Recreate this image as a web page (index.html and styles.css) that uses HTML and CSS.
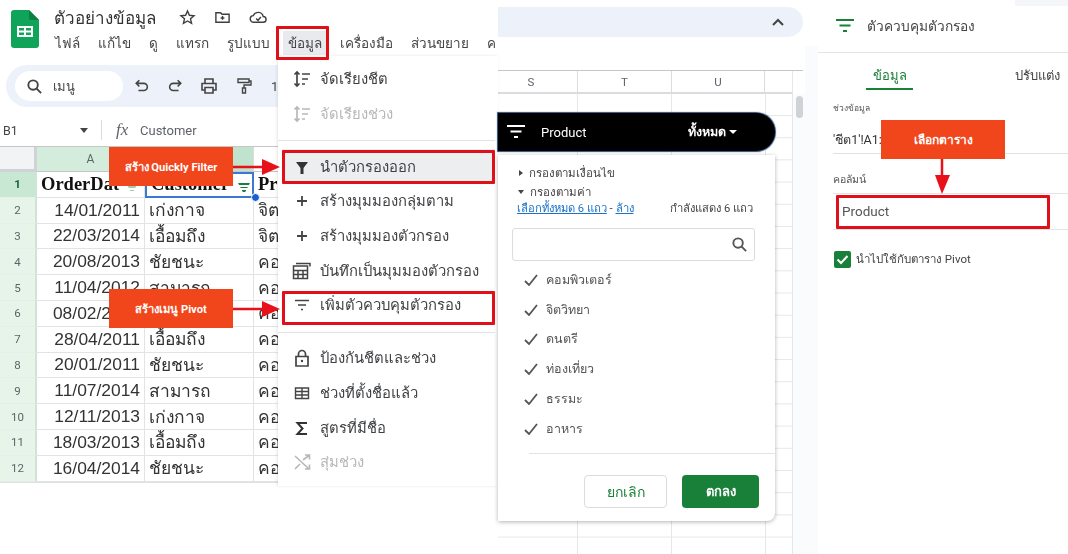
FILE: index.html
```html
<!DOCTYPE html>
<html lang="th">

<head>
    <meta charset="utf-8">
    <title>ตัวอย่างข้อมูล</title>
    <link rel="stylesheet" href="styles.css">
</head>

<body>
    <div id="page">
        <div id="sheet">
            <div id="docbar">
                <svg class="logo" viewBox="0 0 28 38" width="28" height="38">
                    <path d="M3 0h15l10 10v25a3 3 0 0 1-3 3H3a3 3 0 0 1-3-3V3a3 3 0 0 1 3-3z" fill="#0fa45a"/>
                    <path d="M18 0l10 10h-8a2 2 0 0 1-2-2z" fill="#0b8043"/>
                    <path d="M6 16h16v11H6z" fill="#fff"/>
                    <path d="M8 18h5v2.500H8zM15 18h5v2.500h-5zM8 22.500h5V25H8zM15 22.500h5V25h-5z" fill="#0fa45a"/>
                </svg>
                <div class="docinfo">
                    <div class="doctitle">
                        <span>ตัวอย่างข้อมูล</span>
                        <svg class="ico" viewBox="0 0 18 18" width="17" height="17"><path d="M9 2.200l2 4.500 4.900.5-3.700 3.200 1.100 4.800L9 12.700l-4.300 2.500 1.100-4.800L2.100 7.200 7 6.700z" fill="none" stroke="#3c4043" stroke-width="1.500"/></svg>
                        <svg class="ico" viewBox="0 0 18 18" width="17" height="17"><path d="M2 4h5l1.500 1.500H16V14H2zM9 7.500v4M7 9.500h4" fill="none" stroke="#3c4043" stroke-width="1.500"/></svg>
                        <svg class="ico" viewBox="0 0 20 18" width="19" height="17"><path d="M5 14a3.500 3.500 0 0 1-.5-7 5.500 5.500 0 0 1 10.500 1 3 3 0 0 1 0 6zM7.500 10l2 2 3-3.500" fill="none" stroke="#3c4043" stroke-width="1.500"/></svg>
                    </div>
                    <div class="docmenu">
                        <span>ไฟล์</span><span>แก้ไข</span><span>ดู</span><span>แทรก</span><span>รูปแบบ</span><span class="on">ข้อมูล</span><span>เครื่องมือ</span><span>ส่วนขยาย</span><span>ค</span>
                    </div>
                </div>
            </div>
            <div id="toolbar">
                <div class="menusearch">
                    <svg viewBox="0 0 18 18" width="17" height="17"><circle cx="7.500" cy="7.500" r="5" fill="none" stroke="#444" stroke-width="2"/><path d="M11 11l5 5" stroke="#444" stroke-width="2"/></svg>
                    <span>เมนู</span>
                </div>
                <svg class="tool" viewBox="0 0 18 18" width="16" height="16"><path d="M3 6h8a4 4 0 0 1 0 8H5M6 2.500L2.500 6 6 9.500" fill="none" stroke="#444" stroke-width="1.800"/></svg>
                <svg class="tool" viewBox="0 0 18 18" width="16" height="16"><path d="M15 6H7a4 4 0 0 0 0 8h6M12 2.500L15.500 6 12 9.500" fill="none" stroke="#444" stroke-width="1.800"/></svg>
                <svg class="tool" viewBox="0 0 18 18" width="18" height="18"><path d="M5 6V2h8v4M5 13H2V6.500h14V13h-3M5 10.500h8V16H5z" fill="none" stroke="#444" stroke-width="1.600"/></svg>
                <svg class="tool" viewBox="0 0 18 18" width="18" height="18"><path d="M3 2h11v3.500H3zM14 4h2v4H9v3M7.500 11h3v5h-3z" fill="none" stroke="#444" stroke-width="1.400"/></svg>
                <span class="toolnum">1</span>
            </div>
            <div id="formula">
                <span class="cellname">B1</span>
                <span class="drop"></span>
                <span class="fx">fx</span>
                <span class="fxvalue">Customer</span>
            </div>
            <div id="grid">
                <div class="corner"></div><div class="colhead sel">A</div><div class="colhead sel2"></div><div class="colhead"></div>

                <div class="rowhead sel2">1</div><div class="cell title">OrderDat<span class="fdot grey"></span></div><div class="cell title picked">Customer<span class="fdot"></span></div><div class="cell title">Pr</div>
                <div class="rowhead">2</div><div class="cell num">14/01/2011</div><div class="cell">เก่งกาจ</div><div class="cell">จิต</div>
                <div class="rowhead">3</div><div class="cell num">22/03/2014</div><div class="cell">เอื้อมถึง</div><div class="cell">จิต</div>
                <div class="rowhead">4</div><div class="cell num">20/08/2013</div><div class="cell">ชัยชนะ</div><div class="cell">คอ</div>
                <div class="rowhead">5</div><div class="cell num">11/04/2012</div><div class="cell">สามารถ</div><div class="cell">คอ</div>
                <div class="rowhead">6</div><div class="cell num">08/02/2012</div><div class="cell">เก่งกาจ</div><div class="cell">คอ</div>
                <div class="rowhead">7</div><div class="cell num">28/04/2011</div><div class="cell">เอื้อมถึง</div><div class="cell">คอ</div>
                <div class="rowhead">8</div><div class="cell num">20/01/2011</div><div class="cell">ชัยชนะ</div><div class="cell">คอ</div>
                <div class="rowhead">9</div><div class="cell num">11/07/2014</div><div class="cell">สามารถ</div><div class="cell">คอ</div>
                <div class="rowhead">10</div><div class="cell num">12/11/2013</div><div class="cell">เก่งกาจ</div><div class="cell">คอ</div>
                <div class="rowhead">11</div><div class="cell num">18/03/2013</div><div class="cell">เอื้อมถึง</div><div class="cell">คอ</div>
                <div class="rowhead">12</div><div class="cell num">16/04/2014</div><div class="cell">ชัยชนะ</div><div class="cell">คอ</div>
            </div>
        </div>

        <div id="sheet2">
            <div class="pillbar">
                <svg viewBox="0 0 14 10" width="14" height="10"><path d="M2 8l5-5 5 5" fill="none" stroke="#444" stroke-width="2"/></svg>
            </div>
            <div class="blankbar"></div>
            <div class="colrow"><div class="first">S</div><div>T</div><div>U</div><div></div></div>
            <div class="gridlines">
                <div class="thumb"></div>
            </div>
        </div>

        <div id="gutter"></div>

        <div id="side">
            <div class="sidestrip"></div>
            <div class="sidehead">
                <svg viewBox="0 0 18 14" width="18" height="14"><path d="M0 1h18M3.500 6.500h11M7 12h4" stroke="#188038" stroke-width="2"/></svg>
                <span>ตัวควบคุมตัวกรอง</span>
            </div>
            <div class="tabs">
                <div class="tab on">ข้อมูล</div>
                <div class="tab">ปรับแต่ง</div>
            </div>
            <div class="sidebody">
                <div class="small">ช่วงข้อมูล</div>
                <div class="rangeval">'ชีต1'!A1:</div>
                <div class="small col">คอลัมน์</div>
                <div class="colval">Product</div>
                <div class="checkrow">
                    <svg viewBox="0 0 17 17" width="17" height="17"><rect width="17" height="17" rx="2" fill="#188038"/><path d="M3.500 8.500l3.500 3.500 6.500-7" fill="none" stroke="#fff" stroke-width="2"/></svg>
                    <span>นำไปใช้กับตาราง Pivot</span>
                </div>
            </div>
        </div>

        <div id="menu">
            <div class="item"><svg viewBox="0 0 20 20" width="20" height="20"><path d="M5 3v14M2.500 5.500L5 3l2.500 2.500M2.500 14.500L5 17l2.500-2.500M10 5h8M10 10h6M10 15h3" fill="none" stroke="#444" stroke-width="1.700"/></svg><span>จัดเรียงชีต</span></div>
            <div class="item off"><svg viewBox="0 0 20 20" width="20" height="20"><path d="M5 3v14M2.500 5.500L5 3l2.500 2.500M2.500 14.500L5 17l2.500-2.500M10 5h8M10 10h6M10 15h3" fill="none" stroke="#444" stroke-width="1.700"/></svg><span>จัดเรียงช่วง</span></div>
            <div class="sep"></div>
            <div class="item filled"><svg viewBox="0 0 20 20" width="20" height="20"><path d="M4 5h12l-4.500 6v6h-3v-6z" fill="#333"/></svg><span>นำตัวกรองออก</span></div>
            <div class="item"><svg viewBox="0 0 20 20" width="20" height="20"><path d="M10 5v10M5 10h10" stroke="#444" stroke-width="1.800"/></svg><span>สร้างมุมมองกลุ่มตาม</span></div>
            <div class="item"><svg viewBox="0 0 20 20" width="20" height="20"><path d="M10 5v10M5 10h10" stroke="#444" stroke-width="1.800"/></svg><span>สร้างมุมมองตัวกรอง</span></div>
            <div class="item"><svg viewBox="0 0 20 20" width="20" height="20"><path d="M4 2.500h14v3M1.500 5h14v12.500h-14zM1.500 9.500h14M1.500 13.500h14M6 9.500v8M11 9.500v8" fill="none" stroke="#444" stroke-width="1.500"/></svg><span>บันทึกเป็นมุมมองตัวกรอง</span></div>
            <div class="item"><svg viewBox="0 0 20 20" width="20" height="20"><path d="M3 5.500h14M6 10h8M9 14.500h2" stroke="#444" stroke-width="1.600"/></svg><span>เพิ่มตัวควบคุมตัวกรอง</span></div>
            <div class="sep"></div>
            <div class="item"><svg viewBox="0 0 20 20" width="20" height="20"><path d="M4 8.500h12V18H4zM6.500 8.500V6a3.500 3.500 0 0 1 7 0v2.500" fill="none" stroke="#444" stroke-width="1.700"/><circle cx="10" cy="13" r="1.200" fill="#444"/></svg><span>ป้องกันชีตและช่วง</span></div>
            <div class="item"><svg viewBox="0 0 20 20" width="20" height="20"><path d="M3.500 5h13v10.500h-13zM3.500 8.500h13M3.500 12h13M10 5v10.500" fill="none" stroke="#444" stroke-width="1.400"/></svg><span>ช่วงที่ตั้งชื่อแล้ว</span></div>
            <div class="item"><svg viewBox="0 0 20 20" width="20" height="20"><path d="M15 5H5.500l5 5.500-5 5.500H15" fill="none" stroke="#333" stroke-width="2"/></svg><span>สูตรที่มีชื่อ</span></div>
            <div class="item off"><svg viewBox="0 0 20 20" width="20" height="20"><path d="M3 4l14 13M3 17l5-5M11 8l6-4.500M13 3h4.500v4.500M13 17h4.500v-4.500" fill="none" stroke="#444" stroke-width="1.600"/></svg><span>สุ่มช่วง</span></div>
        </div>

        <div id="filter">
            <div class="filterbar">
                <svg viewBox="0 0 18 14" width="18" height="14"><path d="M0 1h18M3.500 6.500h11M7 12h4" stroke="#fff" stroke-width="2"/></svg>
                <span class="fname">Product</span>
                <span class="fall">ทั้งหมด</span>
                <span class="fcaret"></span>
            </div>
            <div class="filterbox">
                <div class="fold"><span class="tri right"></span>กรองตามเงื่อนไข</div>
                <div class="fold"><span class="tri down"></span>กรองตามค่า</div>
                <div class="links">
                    <span><a href="#">เลือกทั้งหมด 6 แถว</a> - <a href="#">ล้าง</a></span>
                    <span>กำลังแสดง 6 แถว</span>
                </div>
                <div class="searchbox">
                    <svg viewBox="0 0 18 18" width="17" height="17"><circle cx="7.500" cy="7.500" r="5" fill="none" stroke="#555" stroke-width="2"/><path d="M11 11l5 5" stroke="#555" stroke-width="2"/></svg>
                </div>
                <ul class="values">
                    <li><svg viewBox="0 0 14 12" width="14" height="12"><path d="M1 7l4 4 8-10" fill="none" stroke="#555" stroke-width="1.800"/></svg>คอมพิวเตอร์</li>
                    <li><svg viewBox="0 0 14 12" width="14" height="12"><path d="M1 7l4 4 8-10" fill="none" stroke="#555" stroke-width="1.800"/></svg>จิตวิทยา</li>
                    <li><svg viewBox="0 0 14 12" width="14" height="12"><path d="M1 7l4 4 8-10" fill="none" stroke="#555" stroke-width="1.800"/></svg>ดนตรี</li>
                    <li><svg viewBox="0 0 14 12" width="14" height="12"><path d="M1 7l4 4 8-10" fill="none" stroke="#555" stroke-width="1.800"/></svg>ท่องเที่ยว</li>
                    <li><svg viewBox="0 0 14 12" width="14" height="12"><path d="M1 7l4 4 8-10" fill="none" stroke="#555" stroke-width="1.800"/></svg>ธรรมะ</li>
                    <li><svg viewBox="0 0 14 12" width="14" height="12"><path d="M1 7l4 4 8-10" fill="none" stroke="#555" stroke-width="1.800"/></svg>อาหาร</li>
                </ul>
                <div class="footer">
                    <button class="btn">ยกเลิก</button>
                    <button class="btn ok">ตกลง</button>
                </div>
            </div>
        </div>

        <div class="handle"></div>
        <div class="redbox" id="box1"></div>
        <div class="redbox" id="box2"></div>
        <div class="redbox" id="box3"></div>
        <div class="redbox" id="box4"></div>

        <svg id="arrows" viewBox="0 0 1068 554" width="1068" height="554">
            <path d="M233 167h30M233 309h30M942 158v20" stroke="#e8111a" stroke-width="2.500"/>
            <path d="M262 159l18 8-18 8zM262 301l18 8-18 8zM935 175h15l-8 19z" fill="#e8111a"/>
        </svg>

        <div class="callout" id="call1">สร้าง Quickly Filter</div>
        <div class="callout" id="call2">สร้างเมนู Pivot</div>
        <div class="callout big" id="call3">เลือกตาราง</div>
    </div>
</body>

</html>
```

FILE: styles.css
```css
* {
    margin: 0;
    padding: 0;
    box-sizing: border-box;
}

body {
    background-color: white;
    font-family: Roboto, "Noto Sans", "Liberation Sans", sans-serif;
    color: #444746;
    overflow: hidden;
}

#page {
    position: relative;
    display: flex;
    width: 1068px;
    height: 554px;
    overflow: hidden;
    filter: blur(0.4px);
}

/* left sheet */
#sheet {
    width: 498px;
    flex: none;
}

#docbar {
    display: flex;
    height: 60px;
    padding: 4px 0 0 11px;
    gap: 15px;
}
.logo {
    margin-top: 6px;
}
.docinfo {
    flex: 1;
    min-width: 0;
}
.doctitle {
    display: flex;
    align-items: center;
    gap: 18px;
    height: 26px;
    font-size: 17px;
    color: #333;
}
.doctitle span {
    margin-right: 5px;
}
.docmenu {
    display: flex;
    gap: 18px;
    margin-top: 1px;
    padding-left: 1px;
    height: 24px;
    font-size: 13.500px;
    line-height: 24px;
    white-space: nowrap;
    overflow: hidden;
}
.docmenu .on {
    background-color: #e8eaed;
    margin: 0 -5px;
    padding: 0 5px;
}

#toolbar {
    display: flex;
    align-items: center;
    height: 42px;
    margin: 5px 0 0 6px;
    background-color: #edf2fa;
    border-radius: 21px 0 0 21px;
    padding-left: 9px;
}
.menusearch {
    display: flex;
    align-items: center;
    gap: 10px;
    width: 108px;
    height: 30px;
    padding-left: 11px;
    background-color: white;
    border-radius: 15px;
    font-size: 13px;
    margin-right: 11px;
}
.tool {
    margin-right: 17px;
}
.toolnum {
    font-size: 13px;
    margin-left: 1px;
}

#formula {
    display: flex;
    align-items: center;
    height: 28px;
    margin: 9px 0 2px;
    padding-left: 3px;
    font-size: 13px;
    color: #5f6368;
}
.cellname {
    width: 77px;
    color: #444;
    font-size: 12.500px;
}
.drop {
    width: 0;
    height: 0;
    border: 4px solid transparent;
    border-top: 5px solid #444;
    border-bottom: 0;
    margin-right: 13px;
}
.fx {
    width: 26px;
    padding-left: 14px;
    border-left: 1px solid #dadce0;
    font-family: "Liberation Serif", serif;
    font-style: italic;
    font-size: 17px;
    box-sizing: content-box;
    margin-right: 4px;
}
.fxvalue {
    margin-left: -6px;
}

#grid {
    display: grid;
    grid-template-columns: 37px 108px 109px 244px;
    grid-template-rows: 25px repeat(12, 25.800px);
    border-top: 1px solid #c4c7c5;
    border-bottom: 1px solid #e0e0e0;
}
.corner {
    background-color: #f1f3f4;
    border-right: 3px solid #d0d3d6;
    border-bottom: 3px solid #d0d3d6;
}
.colhead {
    display: flex;
    align-items: center;
    justify-content: center;
    font-size: 12px;
    color: #5f6368;
    border-right: 1px solid #dadce0;
    border-bottom: 1px solid #c4c7c5;
}
.colhead.sel {
    background-color: #d3ecdc;
}
.colhead.sel2 {
    background-color: #bfe3cd;
}
.rowhead {
    display: flex;
    align-items: center;
    justify-content: center;
    font-size: 11.500px;
    color: #5f6368;
    background-color: #e6f4ea;
    border-right: 2px solid #cfe3d6;
    border-bottom: 1px solid #e3efe7;
}
.rowhead.sel2 {
    background-color: #c9e8d4;
    font-weight: bold;
    color: #14633a;
}
.cell {
    display: flex;
    align-items: center;
    position: relative;
    padding-left: 4px;
    overflow: hidden;
    white-space: nowrap;
    font-family: "Liberation Sans", sans-serif;
    font-size: 17.400px;
    color: #333;
    border-right: 1px solid #e2e3e3;
    border-bottom: 1px solid #e2e3e3;
}
.cell.num {
    justify-content: flex-end;
    padding-right: 4px;
}
.cell.title {
    font-family: "Liberation Serif", serif;
    font-weight: bold;
    font-size: 18.500px;
    color: #111;
}
.cell.picked {
    border: 2px solid #3a78d4;
}
.fdot {
    position: absolute;
    right: 2px;
    top: 9px;
    width: 12px;
    height: 9px;
    background: linear-gradient(#188038 1.500px, transparent 1.500px 3.500px, #188038 3.500px 5px, transparent 5px 7px, #188038 7px 8.500px, transparent 8.500px) center / 100% 100% no-repeat;
    clip-path: polygon(0 0, 100% 0, 60% 100%, 40% 100%);
    background-color: white;
}
.fdot.grey {
    right: 6px;
    top: 11px;
    opacity: 0.4;
}

/* grid behind the filter */
#sheet2 {
    width: 307px;
    flex: none;
    padding-top: 7px;
}
.pillbar {
    display: flex;
    align-items: center;
    justify-content: flex-end;
    height: 30px;
    padding-right: 18px;
    background-color: #edf2fa;
    border-radius: 0 15px 15px 0;
    margin-right: 2px;
}
.blankbar {
    height: 34px;
    border-bottom: 1px solid #c4c7c5;
    margin-right: 2px;
}
.colrow {
    display: grid;
    grid-template-columns: 80px 94px 93px 28px;
    height: 23px;
    margin-right: 12px;
    border-bottom: 2px solid #dadce0;
    border-right: 1px solid #e6e7e8;
}
.colrow div {
    display: flex;
    align-items: center;
    justify-content: center;
    font-size: 11.500px;
    color: #5f6368;
    border-right: 1px solid #dadce0;
}
.colrow div:last-child {
    border-right: none;
}
.colrow .first {
    padding-right: 13px;
}
.gridlines {
    position: relative;
    height: 460px;
    background-image:
        linear-gradient(#e6e7e8 1px, transparent 1px),
        linear-gradient(90deg, transparent 79px, #e6e7e8 79px 80px, transparent 80px 173px, #e6e7e8 173px 174px, transparent 174px 267px, #e6e7e8 267px 268px, transparent 268px);
    background-size: 100% 22.200px, 100% 100%;
    background-position: 0 21px, 0 0;
    border-right: 12px solid #fafbfc;
    box-shadow: inset -1px 0 0 #e6e7e8;
}
.thumb {
    position: absolute;
    right: -10px;
    top: 2px;
    width: 7px;
    height: 22px;
    background-color: #d0d3d6;
    border-radius: 4px;
}

#gutter {
    width: 13px;
    flex: none;
    margin-top: 46px;
    background-color: #fafbfc;
}

/* right panel */
#side {
    flex: 1;
    min-width: 0;
}
.sidestrip {
    height: 6px;
    width: 53px;
    margin-left: auto;
    background-color: #f4f6f9;
}
.sidehead {
    display: flex;
    align-items: center;
    gap: 13px;
    height: 47px;
    padding: 0 0 6px 18px;
    border-bottom: 1px solid #e3e4e6;
    font-size: 13.700px;
    color: #444;
}
.tabs {
    display: flex;
    justify-content: space-between;
    height: 37px;
    padding: 12px 8px 0 48px;
    font-size: 13px;
}
.tab {
    height: 25px;
}
.tab.on {
    color: #188038;
    position: relative;
    width: 47px;
    text-align: center;
    border-bottom: 2px solid #188038;
}
.sidebody {
    padding: 11px 0 0 15px;
}
.small {
    font-size: 8.500px;
    height: 13px;
    color: #555;
}
.small.col {
    font-size: 10.500px;
    margin-top: 17px;
    height: 22px;
}
.rangeval {
    height: 34px;
    padding-top: 10px;
    margin-top: 6px;
    font-size: 12.500px;
    color: #333;
    border-bottom: 1px solid #dfe1e5;
}
.colval {
    height: 37px;
    padding: 9px 0 0 9px;
    font-size: 13.500px;
    color: #555;
    border-top: 1px solid #e3e4e6;
    border-bottom: 1px solid #e3e4e6;
}
.checkrow {
    display: flex;
    align-items: center;
    gap: 5px;
    margin: 20px 0 0 1px;
    font-size: 11.500px;
    color: #444;
}

/* data menu */
#menu {
    position: absolute;
    left: 278px;
    top: 56px;
    width: 220px;
    height: 430px;
    padding: 6px 3px 0 4px;
    background-color: white;
    box-shadow: -1px 0 3px rgba(0, 0, 0, 0.1);
}
.item {
    display: flex;
    align-items: center;
    gap: 8px;
    height: 34.700px;
    padding-left: 10px;
    font-size: 14.800px;
    color: #3f4144;
    white-space: nowrap;
}
.item.off {
    opacity: 0.38;
}
.item.filled {
    background-color: #eceef0;
}
.sep {
    height: 1px;
    background-color: #e1e3e6;
    margin: 9px 0 8px -4px;
}

/* filter */
#filter {
    position: absolute;
    left: 498px;
    top: 113px;
    width: 277px;
}
.filterbar {
    display: flex;
    align-items: center;
    height: 38px;
    padding: 0 38px 0 9px;
    background-color: black;
    border-radius: 0 19px 19px 0;
    box-shadow: 0 0 1px 1px #2c4a7c;
    color: white;
}
.fname {
    flex: 1;
    margin-left: 16px;
    font-size: 13px;
}
.fall {
    font-size: 12.500px;
    font-weight: bold;
}
.fcaret {
    width: 0;
    height: 0;
    margin-left: 3px;
    border: 4px solid transparent;
    border-top: 4px solid white;
    border-bottom: 0;
}
.filterbox {
    height: 366px;
    margin-top: 4px;
    padding-top: 8px;
    background-color: white;
    border-radius: 0 0 8px 0;
    box-shadow: 0 1px 4px rgba(0, 0, 0, 0.3);
}
.fold {
    display: flex;
    align-items: center;
    height: 19px;
    padding-left: 21px;
    font-size: 11.500px;
    color: #444;
}
.tri {
    width: 0;
    height: 0;
    margin-right: 6px;
    border: 3px solid transparent;
}
.tri.right {
    border-left: 4px solid #444;
    border-right: 0;
}
.tri.down {
    border-top: 4px solid #444;
    border-bottom: 0;
    margin-left: -1px;
}
.links {
    display: flex;
    justify-content: space-between;
    padding: 0 22px 0 19px;
    margin-top: -2px;
    height: 18px;
    font-size: 11.200px;
    color: #444;
}
.links a {
    color: #1a73c8;
}
.searchbox {
    display: flex;
    align-items: center;
    justify-content: flex-end;
    width: 243px;
    height: 33px;
    margin: 11px 0 0 14px;
    padding-right: 6px;
    border: 1px solid #dadce0;
    border-radius: 3px;
}
.values {
    list-style: none;
    padding: 4px 0 0 26px;
    height: 192px;
}
.values li {
    display: flex;
    align-items: center;
    gap: 8px;
    height: 29.800px;
    font-size: 12.500px;
    color: #555;
}
.footer {
    display: flex;
    justify-content: flex-end;
    gap: 15px;
    padding: 21px 16px 0 0;
    margin-left: 31px;
    border-top: 1px solid #e3e4e6;
}
.btn {
    width: 83px;
    height: 33px;
    font-family: inherit;
    font-size: 14px;
    color: #188038;
    background-color: white;
    border: 1px solid #dadce0;
    border-radius: 4px;
}
.btn.ok {
    width: 77px;
    font-size: 13px;
    color: white;
    background-color: #188038;
    border: none;
    font-weight: bold;
}

/* annotations */
.handle {
    position: absolute;
    left: 251px;
    top: 193px;
    width: 9px;
    height: 9px;
    border-radius: 50%;
    background-color: #1a5fd0;
    border: 1px solid white;
}
.redbox {
    position: absolute;
    border: 3px solid #e0101a;
    border-radius: 1px;
}
#box1 { left: 276px; top: 26px; width: 53px; height: 34px; }
#box2 { left: 282px; top: 150px; width: 213px; height: 34px; }
#box3 { left: 282px; top: 291px; width: 213px; height: 34px; }
#box4 { left: 836px; top: 195px; width: 214px; height: 34px; }

#arrows {
    position: absolute;
    left: 0;
    top: 0;
}

.callout {
    position: absolute;
    display: flex;
    align-items: center;
    justify-content: center;
    width: 124px;
    height: 39px;
    background-color: #f1451b;
    color: white;
    font-size: 11.200px;
    font-weight: bold;
}
.callout.big {
    font-size: 12px;
}
#call1 { left: 109px; top: 147px; }
#call2 { left: 109px; top: 289px; }
#call3 { left: 881px; top: 120px; }
```
